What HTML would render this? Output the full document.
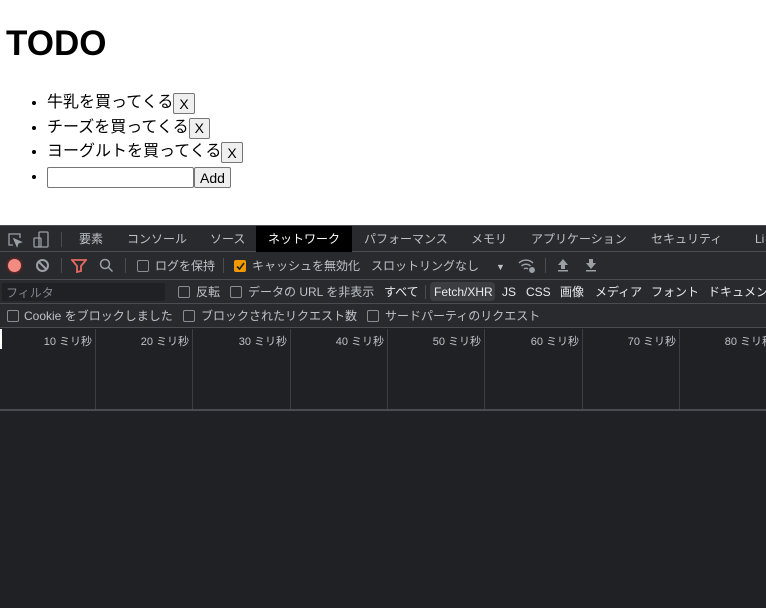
<!DOCTYPE html>
<html><head><meta charset="utf-8"><style>
*{box-sizing:border-box}
body{margin:0;width:766px;height:608px;overflow:hidden;background:#fff;font-family:"Liberation Sans","Noto Sans CJK JP",sans-serif;position:relative}
h1{position:absolute;left:6px;top:24px;margin:0;font-size:35px;font-weight:bold;line-height:40px}
ul{position:absolute;left:0;top:91px;margin:0;padding-left:47px;font-size:16px;line-height:24px}
li{height:24.7px}
button{font:14px "Liberation Sans",sans-serif;background:#efefef;border:1px solid #767676;border-radius:2px;padding:0 5px;height:21px;vertical-align:top;margin-top:2px}
input{width:147px;height:21px;border:1px solid #767676;border-radius:2px;vertical-align:top;margin-top:2px}
.dt{position:absolute;left:0;top:225px;width:766px;height:383px;background:#202124;color:#bdc1c6;font-size:12px;font-family:"Liberation Sans","Noto Sans CJK JP",sans-serif}
.bar{position:absolute;left:0;width:766px;background:#292a2d;border-bottom:1px solid #494c50}
.t{position:absolute;white-space:nowrap;line-height:14px}
.cb{position:absolute;width:12px;height:12px;border:1px solid #8a8d91;border-radius:2px}
.vl{position:absolute;width:1px;background:#494c50}
.gl{position:absolute;top:104px;width:1px;height:81px;background:#3c3f43}
.tk{position:absolute;top:108px;font-size:11px;color:#bdc1c6;text-align:right;width:91px}
</style></head><body>
<h1>TODO</h1>
<ul>
<li>牛乳を買ってくる<button>X</button></li>
<li>チーズを買ってくる<button>X</button></li>
<li>ヨーグルトを買ってくる<button>X</button></li>
<li><input><button>Add</button></li>
</ul>
<div class="dt">
<div class="bar" style="top:0;height:27px;border-top:1px solid #494c50">
 <svg style="position:absolute;left:7px;top:6px" width="16" height="16" fill="none" stroke="#9aa0a6" stroke-width="1.3"><path d="M6 13H2V2h11v4"/><path d="M7 7l7 3-3 1-1 3z" fill="#9aa0a6"/></svg>
 <svg style="position:absolute;left:33px;top:5px" width="16" height="18" fill="none" stroke="#9aa0a6" stroke-width="1.3"><rect x="6" y="1" width="9" height="15" rx="1"/><rect x="1" y="7" width="7" height="9" rx="1"/></svg>
 <div class="vl" style="left:61px;top:6px;height:15px"></div>
 <span class="t" style="left:79px;top:6px">要素</span>
 <span class="t" style="left:127px;top:6px">コンソール</span>
 <span class="t" style="left:210px;top:6px">ソース</span>
 <div style="position:absolute;left:256px;top:0;width:96px;height:26px;background:#000"></div>
 <span class="t" style="left:268px;top:6px;color:#fff">ネットワーク</span>
 <span class="t" style="left:364px;top:6px">パフォーマンス</span>
 <span class="t" style="left:471px;top:6px">メモリ</span>
 <span class="t" style="left:531px;top:6px">アプリケーション</span>
 <span class="t" style="left:651px;top:6px">セキュリティ</span>
 <span class="t" style="left:755px;top:6px">Li</span>
</div>
<div class="bar" style="top:27px;height:28px">
 <div style="position:absolute;left:8px;top:7px;width:13px;height:13px;border-radius:50%;background:#f28b82;box-shadow:0 0 3px #c5221f"></div>
 <svg style="position:absolute;left:35px;top:6px" width="15" height="15" fill="none" stroke="#9aa0a6" stroke-width="2"><circle cx="7.5" cy="7.5" r="5.5"/><path d="M3.5 3.5l8 8"/></svg>
 <div class="vl" style="left:61px;top:6px;height:15px"></div>
 <svg style="position:absolute;left:71px;top:7px" width="16" height="14"><path d="M1 1h14L10 7v5l-4 1V7z" fill="none" stroke="#e46962" stroke-width="1.8"/></svg>
 <svg style="position:absolute;left:99px;top:6px" width="15" height="15" fill="none" stroke="#9aa0a6" stroke-width="1.5"><circle cx="6" cy="6" r="4.5"/><path d="M9.5 9.5l4 4"/></svg>
 <div class="vl" style="left:125px;top:6px;height:15px"></div>
 <div class="cb" style="left:137px;top:8px"></div><span class="t" style="left:155px;top:7px">ログを保持</span>
 <div class="vl" style="left:223px;top:6px;height:15px"></div>
 <div class="cb" style="left:234px;top:8px;background:#f29900;border-color:#f29900"></div>
 <svg style="position:absolute;left:236px;top:10px" width="9" height="9"><path d="M1 4.5l2.5 2.5L8 1" fill="none" stroke="#202124" stroke-width="1.6"/></svg>
 <span class="t" style="left:252px;top:7px">キャッシュを無効化</span>
 <span class="t" style="left:371px;top:7px">スロットリングなし</span>
 <span class="t" style="left:496px;top:8px;font-size:9px">▼</span>
 <svg style="position:absolute;left:518px;top:6px" width="18" height="16" fill="none" stroke="#9aa0a6" stroke-width="1.5"><path d="M1 5a10 10 0 0 1 14 0M3.5 8a6.5 6.5 0 0 1 9 0M6 11a3 3 0 0 1 4 0"/><circle cx="14" cy="12" r="2.2" fill="#9aa0a6"/></svg>
 <div class="vl" style="left:545px;top:6px;height:15px"></div>
 <svg style="position:absolute;left:557px;top:7px" width="12" height="13" fill="#9aa0a6"><path d="M6 0L1 6h3v4h4V6h3z"/><rect x="1" y="11" width="10" height="1.5"/></svg>
 <svg style="position:absolute;left:585px;top:7px" width="12" height="13" fill="#9aa0a6"><path d="M6 10L1 4h3V0h4v4h3z"/><rect x="1" y="11" width="10" height="1.5"/></svg>
</div>
<div class="bar" style="top:55px;height:24px;background:#292a2d">
 <div style="position:absolute;left:2px;top:3px;width:163px;height:18px;background:#202124"></div>
 <span class="t" style="left:6px;top:6px;color:#80868b">フィルタ</span>
 <div class="cb" style="left:178px;top:6px"></div><span class="t" style="left:196px;top:5px">反転</span>
 <div class="cb" style="left:230px;top:6px"></div><span class="t" style="left:248px;top:5px">データの URL を非表示</span>
 <span class="t" style="left:384px;top:5px;color:#e8eaed">すべて</span>
 <div class="vl" style="left:425px;top:5px;height:14px"></div>
 <div style="position:absolute;left:430px;top:2px;width:65px;height:19px;border-radius:4px;background:#3c3d40"></div>
 <span class="t" style="left:434px;top:5px;color:#e8eaed">Fetch/XHR</span>
 <span class="t" style="left:502px;top:5px;color:#e8eaed">JS</span>
 <span class="t" style="left:526px;top:5px;color:#e8eaed">CSS</span>
 <span class="t" style="left:560px;top:5px;color:#e8eaed">画像</span>
 <span class="t" style="left:595px;top:5px;color:#e8eaed">メディア</span>
 <span class="t" style="left:651px;top:5px;color:#e8eaed">フォント</span>
 <span class="t" style="left:708px;top:5px;color:#e8eaed">ドキュメント</span>
</div>
<div class="bar" style="top:79px;height:24px">
 <div class="cb" style="left:7px;top:6px"></div><span class="t" style="left:24px;top:5px">Cookie をブロックしました</span>
 <div class="cb" style="left:183px;top:6px"></div><span class="t" style="left:201px;top:5px">ブロックされたリクエスト数</span>
 <div class="cb" style="left:367px;top:6px"></div><span class="t" style="left:385px;top:5px">サードパーティのリクエスト</span>
</div>
<div style="position:absolute;left:0;top:104px;width:2px;height:20px;background:#fff"></div>
<div class="gl" style="left:95px"></div><div class="gl" style="left:192px"></div><div class="gl" style="left:290px"></div><div class="gl" style="left:387px"></div><div class="gl" style="left:484px"></div><div class="gl" style="left:582px"></div><div class="gl" style="left:679px"></div>
<span class="tk" style="left:1px">10 ミリ秒</span>
<span class="tk" style="left:98px">20 ミリ秒</span>
<span class="tk" style="left:196px">30 ミリ秒</span>
<span class="tk" style="left:293px">40 ミリ秒</span>
<span class="tk" style="left:390px">50 ミリ秒</span>
<span class="tk" style="left:488px">60 ミリ秒</span>
<span class="tk" style="left:585px">70 ミリ秒</span>
<span class="tk" style="left:682px">80 ミリ秒</span>
<div style="position:absolute;left:0;top:184px;width:766px;height:2px;background:#494c50"></div>
</div>
</body></html>
